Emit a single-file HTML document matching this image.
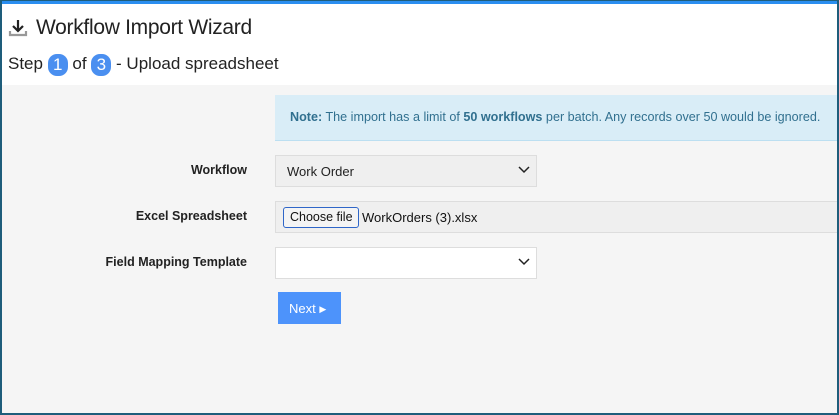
<!DOCTYPE html>
<html><head><style>
*{box-sizing:border-box;margin:0;padding:0}
body{width:839px;height:415px;overflow:hidden;background:#fff;font-family:"Liberation Sans",sans-serif;position:relative}
.frame{position:absolute;left:0;top:0;width:839px;height:415px;border:2px solid #1e5d7b;border-top:1px solid #1e5d7b}
.topbar{position:absolute;left:1px;top:1px;width:836px;height:3px;background:#2a8ef0}
.gray{position:absolute;left:2px;top:85px;width:835px;height:328px;background:#f5f5f5}
.title{position:absolute;left:36px;top:16px;font-size:21px;color:#222;letter-spacing:-0.3px}
.step{position:absolute;left:8px;top:54px;font-size:17px;color:#222}
.badge{display:inline-block;background:#4a8ff0;color:#fff;border-radius:9px;width:20px;height:22px;text-align:center;line-height:22px;vertical-align:-1px}
.note{position:absolute;left:275px;top:95px;width:564px;height:46px;background:#d9edf7;border-bottom:1px solid #bcdff1;color:#31708f;font-size:12.6px;padding:15px 0 0 15px;white-space:nowrap}
.lbl{position:absolute;font-size:12.5px;font-weight:bold;color:#222;text-align:right;width:247px;left:0}
.sel{position:absolute;left:275px;width:262px;height:32px;border:1px solid #ddd;font-size:13px;color:#222;padding:8px 0 0 11px}
.chev{position:absolute;right:6px;top:10px}
.file{position:absolute;left:275px;top:201px;width:564px;height:32px;background:#efefef;border:1px solid #ddd;font-size:13px;color:#111}
.cf{position:absolute;left:7px;top:5px;width:76px;height:21px;border:1px solid #2f66c8;border-radius:3px;background:#f4f4f4;font-size:12.5px;padding:2px 0 0 6px;white-space:nowrap}
.next{position:absolute;left:278px;top:292px;width:63px;height:32px;background:#4d93fb;color:#fff;font-size:13px;padding:9px 0 0 11px}
</style></head><body>
<div class="topbar"></div>
<div class="gray"></div>
<svg style="position:absolute;left:8px;top:18px" width="20" height="20" viewBox="0 0 20 20"><path d="M10 2v10M5 8l5 5 5-5" stroke="#222" stroke-width="2.2" fill="none"/><path d="M2 13v4h16v-4" stroke="#999" stroke-width="2.2" fill="none"/></svg>
<div class="title">Workflow Import Wizard</div>
<div class="step">Step <span class="badge">1</span> of <span class="badge">3</span> - Upload spreadsheet</div>
<div class="note"><b>Note:</b> The import has a limit of <b>50 workflows</b> per batch. Any records over 50 would be ignored.</div>
<div class="lbl" style="top:163px">Workflow</div>
<div class="sel" style="top:155px;background:#efefef">Work Order<svg class="chev" width="12" height="8"><path d="M1 1l5 5 5-5" stroke="#222" stroke-width="1.5" fill="none"/></svg></div>
<div class="lbl" style="top:209px">Excel Spreadsheet</div>
<div class="file"><div class="cf">Choose file</div><span style="position:absolute;left:86px;top:8px">WorkOrders (3).xlsx</span></div>
<div class="lbl" style="top:255px">Field Mapping Template</div>
<div class="sel" style="top:247px;background:#fff"><svg class="chev" width="12" height="8"><path d="M1 1l5 5 5-5" stroke="#222" stroke-width="1.5" fill="none"/></svg></div>
<div class="next">Next <span style="font-size:9px;vertical-align:1px">&#9654;</span></div>
<div class="frame"></div>
</body></html>
